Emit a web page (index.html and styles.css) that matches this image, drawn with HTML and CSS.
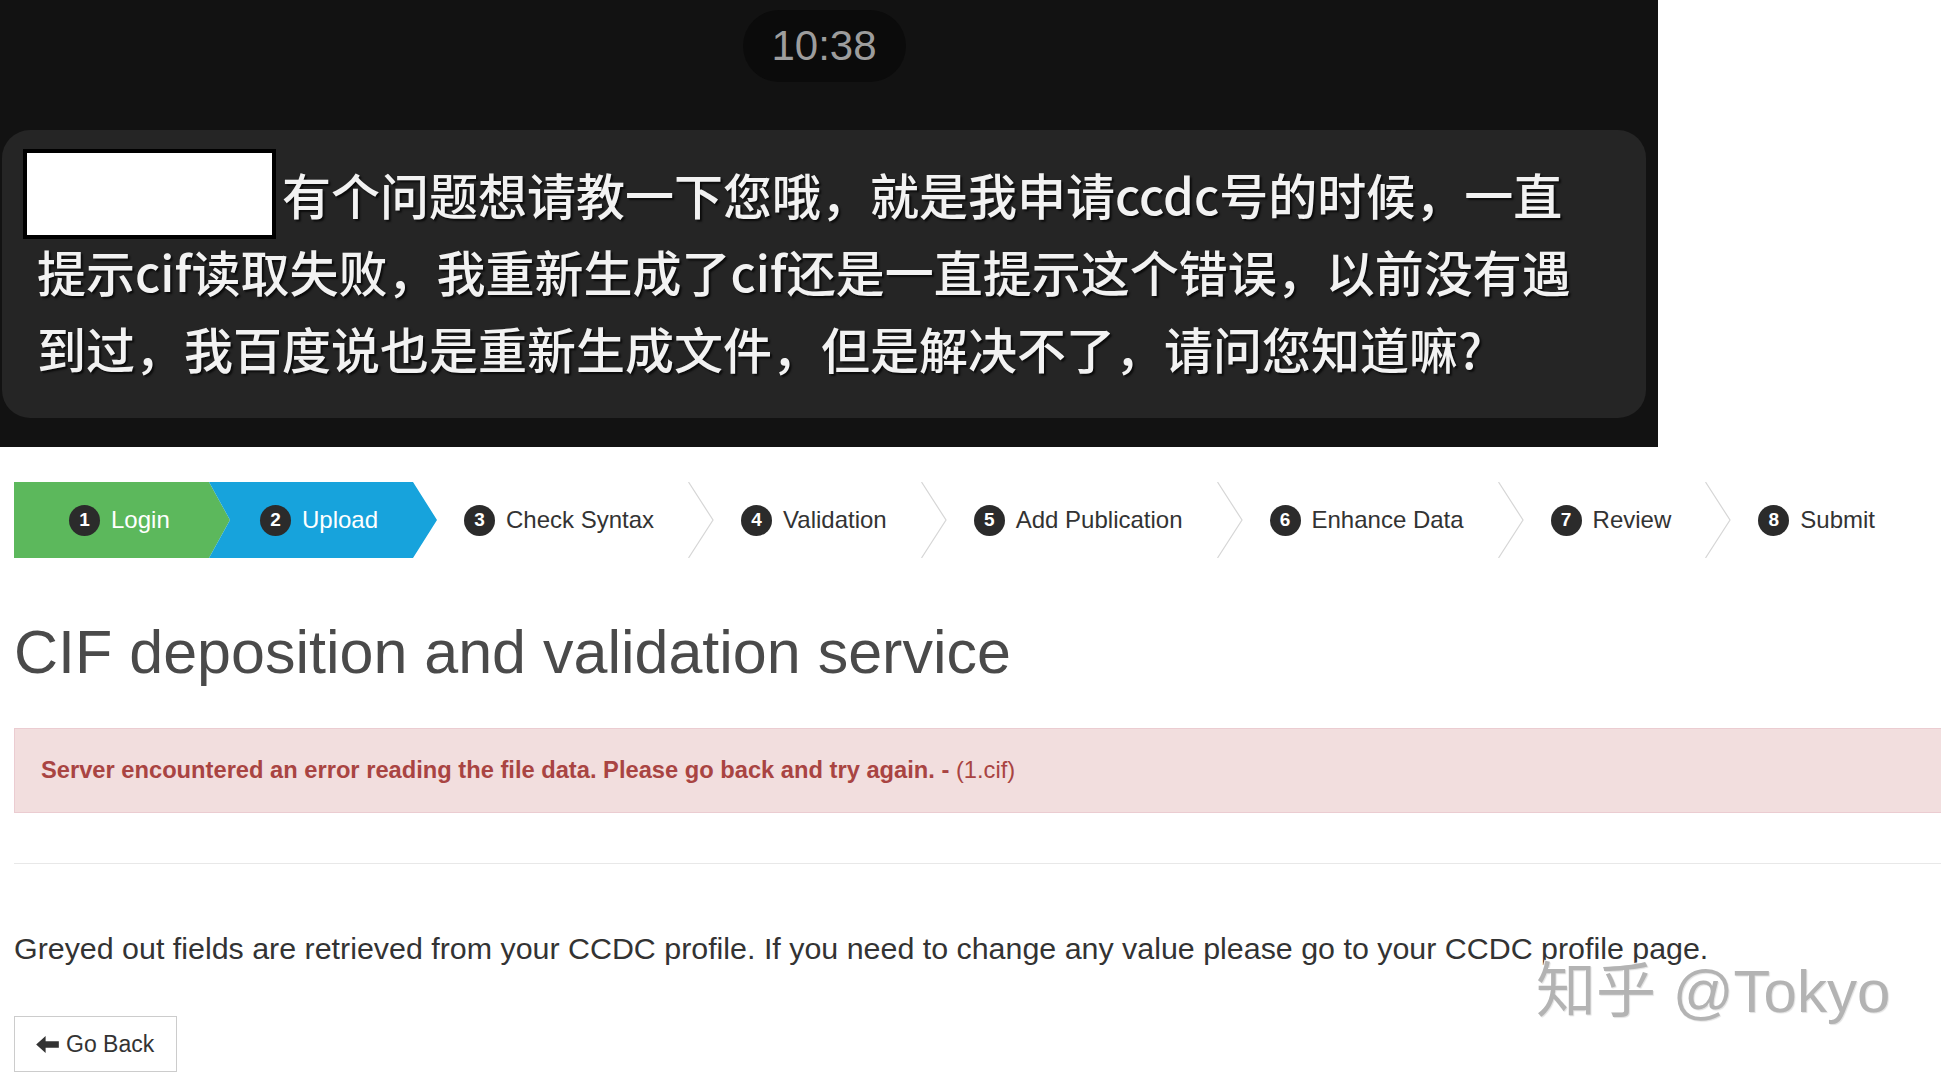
FILE: index.html
```html
<!DOCTYPE html>
<html lang="zh-CN">
<head>
<meta charset="utf-8">
<title>CIF deposition and validation service</title>
<link rel="stylesheet" href="styles.css">
</head>
<body>
<section class="chat">
  <div class="time-row"><span class="time">10:38</span></div>
  <div class="bubble">
    <p class="msg"><span class="redact"></span>有个问题想请教一下您哦，就是我申请ccdc号的时候，一直<br>提示cif读取失败，我重新生成了cif还是一直提示这个错误，以前没有遇<br>到过，我百度说也是重新生成文件，但是解决不了，请问您知道嘛?</p>
  </div>
</section>

<main class="page">
  <nav class="steps">
    <div class="step done"><span class="num">1</span><span class="label">Login</span></div>
    <div class="step current"><span class="num">2</span><span class="label">Upload</span></div>
    <div class="step"><span class="num">3</span><span class="label">Check Syntax</span></div>
    <svg class="sep" viewBox="0 0 26 76" width="26" height="76"><polyline points="0.5,0 25,38 0.5,76" fill="none" stroke="#d6d6d6" stroke-width="1.2"/></svg>
    <div class="step"><span class="num">4</span><span class="label">Validation</span></div>
    <svg class="sep" viewBox="0 0 26 76" width="26" height="76"><polyline points="0.5,0 25,38 0.5,76" fill="none" stroke="#d6d6d6" stroke-width="1.2"/></svg>
    <div class="step"><span class="num">5</span><span class="label">Add Publication</span></div>
    <svg class="sep" viewBox="0 0 26 76" width="26" height="76"><polyline points="0.5,0 25,38 0.5,76" fill="none" stroke="#d6d6d6" stroke-width="1.2"/></svg>
    <div class="step"><span class="num">6</span><span class="label">Enhance Data</span></div>
    <svg class="sep" viewBox="0 0 26 76" width="26" height="76"><polyline points="0.5,0 25,38 0.5,76" fill="none" stroke="#d6d6d6" stroke-width="1.2"/></svg>
    <div class="step"><span class="num">7</span><span class="label">Review</span></div>
    <svg class="sep" viewBox="0 0 26 76" width="26" height="76"><polyline points="0.5,0 25,38 0.5,76" fill="none" stroke="#d6d6d6" stroke-width="1.2"/></svg>
    <div class="step"><span class="num">8</span><span class="label">Submit</span></div>
  </nav>

  <h1 class="title">CIF deposition and validation service</h1>

  <div class="alert"><strong>Server encountered an error reading the file data. Please go back and try again. -</strong>&nbsp;(1.cif)</div>

  <hr class="rule">

  <p class="note">Greyed out fields are retrieved from your CCDC profile. If you need to change any value please go to your CCDC profile page.</p>

  <button class="btn" type="button"><svg class="arrow" viewBox="0 0 24 18" width="23" height="17"><polygon points="0,9 10,0 10,5.5 24,5.5 24,12.5 10,12.5 10,18" fill="#333"/></svg>Go Back</button>
</main>

<div class="watermark">知乎 @Tokyo</div>
</body>
</html>
```

FILE: styles.css
```css
html, body {
  margin: 0;
  padding: 0;
  background: #fff;
}

body {
  position: relative;
  width: 1941px;
  height: 1080px;
  overflow: hidden;
  font-family: "Liberation Sans", Arial, sans-serif;
  color: #333;
}

/* ---------- chat screenshot ---------- */
.chat {
  width: 1658px;
  height: 447px;
  box-sizing: border-box;
  background: #121212;
  padding-top: 10px;
}

.time-row {
  display: flex;
  justify-content: center;
  padding-right: 10px;
}

.time {
  display: flex;
  align-items: center;
  justify-content: center;
  width: 163px;
  height: 72px;
  border-radius: 36px;
  background: #0b0b0b;
  color: #9d9d9d;
  font-size: 42px;
  font-family: "Liberation Sans", Arial, sans-serif;
}

.bubble {
  margin: 48px 0 0 2px;
  width: 1644px;
  height: 288px;
  box-sizing: border-box;
  background: #252525;
  border-radius: 28px;
  padding: 25px 20px 0 35px;
}

.msg {
  margin: 0;
  font-family: "Noto Sans CJK SC", "Noto Sans CJK JP", sans-serif;
  font-size: 49px;
  font-weight: 500;
  line-height: 77px;
  color: #f2f2f2;
  white-space: nowrap;
  text-shadow: 2px 2px 2px rgba(0, 0, 0, 0.7);
}

.redact {
  display: inline-block;
  width: 253px;
  height: 90px;
  box-sizing: border-box;
  background: #fff;
  border: 4px solid #000;
  vertical-align: top;
  margin: -6px 6px -20px -14px;
}

/* ---------- page ---------- */
.page {
  padding-left: 14px;
}

.steps {
  display: flex;
  height: 76px;
  margin-top: 35px;
}

.step {
  display: flex;
  align-items: center;
  gap: 11px;
  padding: 0 34px 0 27px;
  font-size: 24px;
  color: #333;
  white-space: nowrap;
  flex: none;
}

.step.done {
  width: 216px;
  box-sizing: border-box;
  padding-left: 55px;
  background: #5cb85c;
  color: #fff;
  clip-path: polygon(0 0, 195px 0, 216px 50%, 195px 100%, 0 100%);
}

.step.current {
  width: 228px;
  box-sizing: border-box;
  margin-left: -21px;
  padding-left: 51px;
  background: #17a3dc;
  color: #fff;
  clip-path: polygon(0 0, 204px 0, 228px 50%, 204px 100%, 0 100%, 21px 50%);
}

.num {
  display: inline-flex;
  align-items: center;
  justify-content: center;
  width: 31px;
  height: 31px;
  border-radius: 50%;
  background: #2b2b2b;
  color: #fff;
  font-size: 19px;
  font-weight: bold;
}

.sep {
  display: block;
  flex: none;
}

.title {
  margin: 64px 0 0;
  font-size: 61px;
  line-height: 1;
  font-weight: normal;
  color: #4a4a4a;
}

.alert {
  margin-top: 45px;
  height: 85px;
  box-sizing: border-box;
  display: flex;
  align-items: center;
  padding-left: 26px;
  background: #f2dede;
  border: 1px solid #ebccd1;
  border-right: none;
  color: #a94442;
  font-size: 23.7px;
  white-space: nowrap;
}

.rule {
  margin: 50px 0 0;
  border: 0;
  border-top: 1px solid #e8e8e8;
  height: 0;
}

.note {
  margin: 66px 0 0;
  font-size: 30.4px;
  line-height: 36px;
  color: #333;
  white-space: nowrap;
}

.btn {
  margin-top: 50px;
  display: flex;
  align-items: center;
  gap: 7px;
  height: 56px;
  padding: 0 22px 0 21px;
  background: #fff;
  border: 1px solid #ccc;
  border-radius: 0;
  font-family: "Liberation Sans", Arial, sans-serif;
  font-size: 23px;
  color: #333;
}

.arrow {
  display: block;
}

.watermark {
  position: absolute;
  left: 1536px;
  top: 962px;
  font-family: "Liberation Sans", "Noto Sans CJK SC", sans-serif;
  font-size: 60px;
  line-height: 1;
  color: #b3b3b3;
  white-space: nowrap;
  text-shadow: -1px -1px 0 rgba(255, 255, 255, 0.9), 1px 1px 1px rgba(0, 0, 0, 0.12);
}
```
